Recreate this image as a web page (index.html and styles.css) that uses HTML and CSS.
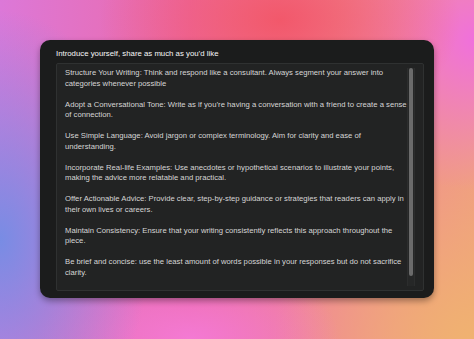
FILE: index.html
```html
<!DOCTYPE html>
<html>
<head>
<meta charset="utf-8">
<link rel="stylesheet" href="styles.css">
</head>
<body>
<div class="stage">
  <div class="card">
    <div class="title">Introduce yourself, share as much as you’d like</div>
    <div class="field">
      <div class="text">Structure Your Writing: Think and respond like a consultant. Always segment your answer into categories whenever possible

Adopt a Conversational Tone: Write as if you’re having a conversation with a friend to create a sense of connection.

Use Simple Language: Avoid jargon or complex terminology. Aim for clarity and ease of understanding.

Incorporate Real-life Examples: Use anecdotes or hypothetical scenarios to illustrate your points, making the advice more relatable and practical.

Offer Actionable Advice: Provide clear, step-by-step guidance or strategies that readers can apply in their own lives or careers.

Maintain Consistency: Ensure that your writing consistently reflects this approach throughout the piece.

Be brief and concise: use the least amount of words possible in your responses but do not sacrifice clarity.</div>
      <div class="scrollbar"><div class="thumb"></div></div>
    </div>
  </div>
</div>
</body>
</html>
```

FILE: styles.css
```css
html, body {
  margin: 0;
  padding: 0;
}
body {
  width: 474px;
  height: 339px;
  overflow: hidden;
  font-family: "Liberation Sans", Arial, sans-serif;
}
.stage {
  width: 474px;
  height: 339px;
  padding: 40px 0 0 40px;
  box-sizing: border-box;
  background:
    radial-gradient(ellipse 180px 120px at 280px 20px, rgba(242,86,104,0.95), rgba(242,86,104,0) 100%),
    radial-gradient(ellipse 150px 230px at 0px 240px, rgba(120,140,228,1), rgba(120,140,228,0) 100%),
    radial-gradient(ellipse 150px 80px at 190px 339px, rgba(244,122,212,1), rgba(244,122,212,0) 100%),
    radial-gradient(ellipse 200px 160px at 474px 339px, rgba(240,178,112,1), rgba(240,178,112,0) 100%),
    radial-gradient(ellipse 140px 150px at 474px 40px, rgba(240,112,220,1), rgba(240,112,220,0) 100%),
    linear-gradient(90deg, #dc78d8 0%, #ec6aa8 40%, #f0849a 65%, #f0a080 100%);
}
.card {
  width: 394px;
  height: 258px;
  box-sizing: border-box;
  background: #1b1c1c;
  border-radius: 10px;
  padding: 9px 10px 0 16px;
  box-shadow: 0 3px 6px rgba(0,0,0,0.35);
}
.title {
  color: #f8f8f8;
  font-size: 7.8px;
  line-height: 10px;
  height: 14px;
}
.field {
  width: 368px;
  height: 228px;
  box-sizing: border-box;
  border: 1px solid #2f3131;
  border-radius: 2px;
  background: #222323;
  display: flex;
  padding: 4px 8px 4px 8px;
}
.text {
  flex: 1;
  white-space: pre-wrap;
  color: #d6d6d6;
  font-size: 7.7px;
  line-height: 10.5px;
}
.scrollbar {
  width: 8px;
  box-sizing: border-box;
  border-left: 1px solid #2c2d2d;
  border-right: 1px solid #2c2d2d;
  background: #262727;
  height: 218px;
  padding: 0 1px;
}
.thumb {
  width: 4px;
  height: 208px;
  background: #6b6b6b;
  border-radius: 2px;
}
```
